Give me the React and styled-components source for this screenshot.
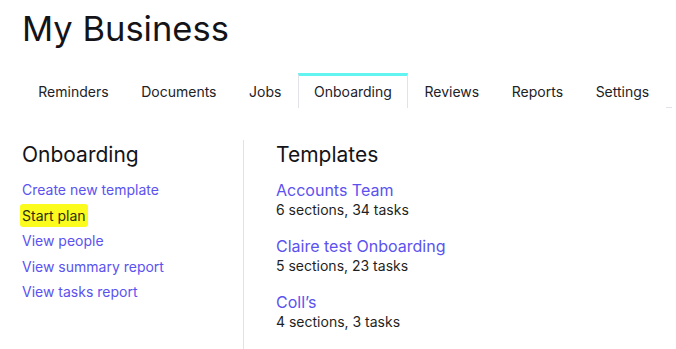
import React from 'react';
import styled, { createGlobalStyle } from 'styled-components';

const GlobalStyle = createGlobalStyle`
    html, body {
        margin: 0;
        padding: 0;
        background: #ffffff;
    }
    body {
        font-family: Inter, "Noto Sans", sans-serif;
        color: #1b1b1f;
    }
`

const Page = styled.div`
    padding: 8px 4px 0 22px;
    min-height: 341px;
    display: flex;
    flex-direction: column;
`

const Title = styled.h1`
    margin: 0;
    font-size: 34.5px;
    line-height: 42px;
    font-weight: 400;
    color: #141418;
`

const TabBar = styled.div`
    display: flex;
    margin-top: 23px;
    border-bottom: 1px solid #e2e2e8;
`

const Tab = styled.div`
    padding: 6px 15.3px;
    font-size: 14px;
    line-height: 20px;
    color: #222226;
    border-top: 3px solid ${props => props.active ? '#62f4f0' : 'transparent'};
    border-left: 1px solid ${props => props.active ? '#e2e2e8' : 'transparent'};
    border-right: 1px solid ${props => props.active ? '#e2e2e8' : 'transparent'};
    background: #ffffff;
    margin-bottom: -1px;
`

const Content = styled.div`
    flex: 1;
    display: flex;
    margin-top: 32px;
`

const Sidebar = styled.div`
    width: 221px;
    border-right: 1px solid #e2e2e4;
`

const Main = styled.div`
    padding-left: 32px;
`

const Heading = styled.h2`
    margin: 2px 0 0 0;
    font-size: 21px;
    line-height: 25px;
    font-weight: 400;
    color: #141418;
`

const LinkList = styled.div`
    margin-top: 10px;
    display: flex;
    flex-direction: column;
    align-items: flex-start;
`

const SideLink = styled.a`
    font-size: 14px;
    line-height: 25.5px;
    color: ${props => props.highlight ? '#2e2e10' : '#5b52f0'};
    text-decoration: none;
    cursor: pointer;
    span {
        background: ${props => props.highlight ? '#fbfb1e' : 'transparent'};
        padding: ${props => props.highlight ? '3px 2px' : '0'};
        margin-left: ${props => props.highlight ? '-2px' : '0'};
        border-radius: 3px;
    }
`

const TemplateList = styled.div`
    margin-top: 13px;
    display: flex;
    flex-direction: column;
    gap: 16px;
`

const Template = styled.div`
    display: flex;
    flex-direction: column;
`

const TemplateName = styled.a`
    font-size: 16px;
    line-height: 20px;
    color: #5b52f0;
    text-decoration: none;
`

const TemplateMeta = styled.div`
    font-size: 14px;
    line-height: 20px;
    color: #1f1f23;
`

const tabs = ['Reminders', 'Documents', 'Jobs', 'Onboarding', 'Reviews', 'Reports', 'Settings'];

const links = ['Create new template', 'Start plan', 'View people', 'View summary report', 'View tasks report'];

const templates = [
    { name: 'Accounts Team', meta: '6 sections, 34 tasks' },
    { name: 'Claire test Onboarding', meta: '5 sections, 23 tasks' },
    { name: 'Coll\u2019s', meta: '4 sections, 3 tasks' },
];

export default function App() {
    return (
        <>
            <GlobalStyle />
            <Page>
                <Title>My Business</Title>
                <TabBar>
                    {tabs.map(t => (
                        <Tab key={t} active={t === 'Onboarding'}>{t}</Tab>
                    ))}
                </TabBar>
                <Content>
                    <Sidebar>
                        <Heading>Onboarding</Heading>
                        <LinkList>
                            {links.map(l => (
                                <SideLink key={l} highlight={l === 'Start plan'}><span>{l}</span></SideLink>
                            ))}
                        </LinkList>
                    </Sidebar>
                    <Main>
                        <Heading>Templates</Heading>
                        <TemplateList>
                            {templates.map(t => (
                                <Template key={t.name}>
                                    <TemplateName>{t.name}</TemplateName>
                                    <TemplateMeta>{t.meta}</TemplateMeta>
                                </Template>
                            ))}
                        </TemplateList>
                    </Main>
                </Content>
            </Page>
        </>
    )
}
